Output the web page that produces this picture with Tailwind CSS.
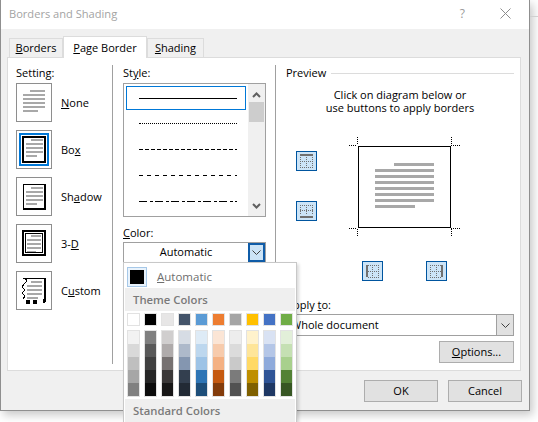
<!DOCTYPE html>
<html lang="en">
<head>
<meta charset="UTF-8">
<title>Borders and Shading</title>
<script src="https://cdn.jsdelivr.net/npm/@tailwindcss/browser@4"></script>
</head>
<body class="bg-white">
<div class="relative w-[538px] h-[422px] overflow-hidden bg-white font-['Open_Sans',sans-serif] text-[11px] leading-[16px] text-black">
  <div class="absolute right-0 top-[16px] w-[8px] h-px bg-[#d0d0d0]"></div>

  <!-- Dialog -->
  <div class="w-[530px] h-[411px] border-x border-b border-[#8f8f8f] bg-[#f0f0f0] shadow-[3px_4px_9px_rgba(0,0,0,0.22)]">
    <!-- Title bar -->
    <div class="h-[29px] bg-white flex items-center pl-[8px] pr-[12px] pb-[2px]">
      <span class="text-[11.1px] text-[#a3a3a3]">Borders and Shading</span>
      <span class="ml-auto text-[12px] text-[#9a9a9a] mr-[35px]">?</span>
      <svg class="w-[11px] h-[11px] mr-[6px]" viewBox="0 0 11 11" fill="none" stroke="#8c8c8c"><path d="M0.5 0.5l10 10M10.5 0.5l-10 10"/></svg>
    </div>

    <!-- Tabs -->
    <div class="flex items-end h-[28px] pl-[8px] relative z-10">
      <div class="w-[54px] h-[19px] border border-b-0 border-[#dcdcdc] bg-[#f0f0f0] flex items-center justify-center"><span><u>B</u>orders</span></div>
      <div class="w-[84px] h-[22px] mb-[-1px] border border-b-0 border-[#dcdcdc] bg-white flex items-center justify-center"><span><u>P</u>age Border</span></div>
      <div class="w-[57px] h-[19px] border border-b-0 border-[#dcdcdc] bg-[#f0f0f0] flex items-center justify-center"><span><u>S</u>hading</span></div>
    </div>

    <!-- Panel -->
    <div class="ml-[6px] w-[514px] h-[314px] border border-[#dcdcdc] bg-white flex pt-[7px]">
      <!-- Setting -->
      <div class="w-[105px] h-[299px] border-r border-[#a0a0a0] pl-[8px]">
        <div class="h-[16px] mb-[2px]">Setting:</div>
        <div class="flex flex-col gap-[8px]">
          <div class="flex items-center gap-[9px] h-[39px]">
            <div class="w-[36px] h-[39px] border border-[#8e8e8e]">
              <svg width="34" height="37" shape-rendering="crispEdges"><path fill="#a8a8a8" d="M13 6h15v2H13zM6 10h22v2H6zM6 14h22v2H6zM6 18h22v2H6zM6 22h22v2H6zM6 26h15v2H6z"/></svg>
            </div>
            <span><u>N</u>one</span>
          </div>
          <div class="flex items-center gap-[9px] h-[39px]">
            <div class="w-[36px] h-[39px] border border-[#8e8e8e]">
              <svg width="34" height="37" shape-rendering="crispEdges"><path fill="none" stroke="#0078d7" stroke-width="2" d="M3 3h28v31H3z"/><path fill="none" stroke="#000" stroke-width="2" d="M6 6h22v25H6z"/><path fill="#a8a8a8" d="M14 8h12v2H14zM9 12h17v2H9zM9 16h17v2H9zM9 20h17v2H9zM9 24h11v2H9z"/></svg>
            </div>
            <span>Bo<u>x</u></span>
          </div>
          <div class="flex items-center gap-[9px] h-[39px]">
            <div class="w-[36px] h-[39px] border border-[#8e8e8e]">
              <svg width="34" height="37" shape-rendering="crispEdges"><path fill="#000" d="M6 6h21v1H7v23h20v2H6zM27 6h2v26h-2z"/><path fill="#a8a8a8" d="M14 9h12v2H14zM9 13h17v2H9zM9 17h17v2H9zM9 21h17v2H9zM9 25h11v2H9z"/></svg>
            </div>
            <span>Sh<u>a</u>dow</span>
          </div>
          <div class="flex items-center gap-[9px] h-[39px]">
            <div class="w-[36px] h-[39px] border border-[#8e8e8e]">
              <svg width="34" height="37" shape-rendering="crispEdges"><path fill="none" stroke="#000" stroke-width="2" d="M6 6h22v24H6z"/><path fill="none" stroke="#000" d="M8.500 8.500h17v19h-17z"/><path fill="#a8a8a8" d="M14 10h10v2H14zM10 14h14v2H10zM10 18h14v2H10zM10 22h14v2H10zM10 26h9v1H10z"/></svg>
            </div>
            <span>3-<u>D</u></span>
          </div>
          <div class="flex items-center gap-[9px] h-[39px]">
            <div class="w-[36px] h-[39px] border border-[#8e8e8e]">
              <svg width="34" height="37" shape-rendering="crispEdges"><path fill="none" stroke="#000" d="M6 6.500h21M8 6l2 3-3 3-2 3 3 3-3 3 3 3-2 3"/><path fill="#000" d="M27 6h2v24h-1v1h-2v-4h1zM9 28h4v4H9zM16 28h4v4h-4z"/><path fill="#a8a8a8" d="M14 9h11v2H14zM10 13h15v2H10zM10 17h15v2H10zM10 21h15v2H10zM10 25h11v2H10z"/></svg>
            </div>
            <span>C<u>u</u>stom</span>
          </div>
        </div>
      </div>

      <!-- Style -->
      <div class="w-[163px] h-[299px] border-r border-[#a0a0a0] pl-[10px]">
        <div class="h-[16px] mb-[2px]">St<u>y</u>le:</div>
        <div class="w-[143px] h-[134px] border border-[#a0a0a0] flex">
          <div class="w-[124px] pl-[2px] pt-[2px]">
            <div class="w-[120px] h-[24px] border border-[#0078d7] flex items-center pl-[12px]"><div class="w-[98px] border-t border-black"></div></div>
            <div class="h-[26px] flex items-center pl-[13px]"><div class="w-[98px] border-t border-dotted border-black"></div></div>
            <svg width="122" height="78" class="block" fill="none" stroke="#000" shape-rendering="crispEdges"><path stroke-dasharray="4 2" d="M13 13.500h98"/><path stroke-dasharray="4 4" d="M13 39.500h98"/><path stroke-dasharray="8 3 3 2" d="M13 65.500h98"/></svg>
          </div>
          <div class="w-[17px] h-[132px] bg-[#f0f0f0] flex flex-col items-center">
            <svg class="mt-[8px]" width="9" height="6" fill="none" stroke="#606060" stroke-width="2"><path d="M1 5l3.500-3.500L8 5"/></svg>
            <div class="w-[15px] h-[20px] mt-[4px] bg-[#cdcdcd]"></div>
            <svg class="mt-auto mb-[7px]" width="9" height="6" fill="none" stroke="#606060" stroke-width="2"><path d="M1 1l3.500 3.500L8 1"/></svg>
          </div>
        </div>
        <div class="h-[16px] mt-[8px] mb-[1px]"><u>C</u>olor:</div>
        <div class="w-[143px] h-[21px] border border-[#a0a0a0] flex">
          <div class="w-[124px] flex items-center justify-center pb-px">Automatic</div>
          <div class="w-[17px] h-[19px] border-2 border-[#0f5ca8] bg-[#cce4f7] flex items-center justify-center">
            <svg width="9" height="5" fill="none" stroke="#404040"><path d="M0.500 0.500l4 4 4-4"/></svg>
          </div>
        </div>
      </div>

      <!-- Preview -->
      <div class="w-[238px] pl-[10px]">
        <div class="flex items-center w-[228px] h-[16px]">
          <span>Preview</span>
          <div class="ml-[5px] flex-1 border-t border-[#dcdcdc]"></div>
        </div>
        <div class="w-[228px] mt-[7px] text-center leading-[13px]">Click on diagram below or<br>use buttons to apply borders</div>
        <div class="relative h-[183px] w-[228px]">
          <div class="absolute left-[10px] top-[37px] w-[21px] h-[20px] border border-[#00559f] bg-[#cce4f7]">
            <svg width="19" height="18" fill="none" stroke="#707070" shape-rendering="crispEdges"><path stroke-width="2" d="M3 3h13"/><path stroke-dasharray="1 1" d="M3.500 5v10M15.500 5v10M9.500 5v10M3 9.500h13M3 15.500h13"/></svg>
          </div>
          <div class="absolute left-[10px] top-[87px] w-[21px] h-[20px] border border-[#00559f] bg-[#cce4f7]">
            <svg width="19" height="18" fill="none" stroke="#707070" shape-rendering="crispEdges"><path stroke-width="2" d="M3 15h13"/><path stroke-dasharray="1 1" d="M3.500 3v10M15.500 3v10M9.500 3v10M3 8.500h13M3 3.500h13"/></svg>
          </div>
          <div class="absolute left-[76px] top-[147px] w-[21px] h-[20px] border border-[#00559f] bg-[#cce4f7]">
            <svg width="19" height="18" fill="none" stroke="#707070" shape-rendering="crispEdges"><path stroke-width="2" d="M4 3v12"/><path stroke-dasharray="1 1" d="M5 3.500h11M5 9.500h11M5 15.500h11M15.500 3v12M9.500 3v12"/></svg>
          </div>
          <div class="absolute left-[140px] top-[147px] w-[21px] h-[20px] border border-[#00559f] bg-[#cce4f7]">
            <svg width="19" height="18" fill="none" stroke="#707070" shape-rendering="crispEdges"><path stroke-width="2" d="M15 3v12"/><path stroke-dasharray="1 1" d="M3 3.500h11M3 9.500h11M3 15.500h11M3.500 3v12M9.500 3v12"/></svg>
          </div>
          <svg class="absolute left-[63px] top-[23px]" width="112" height="100" fill="none" shape-rendering="crispEdges">
            <path stroke="#000" stroke-dasharray="1 1" d="M0 8.500h8M8.500 0v8M102 8.500h9M102.500 0v8M0 91.500h8M8.500 92v8M102 91.500h9M102.500 92v8"/>
            <rect x="9.500" y="9.500" width="92" height="81" stroke="#000"/>
            <path fill="#a8a8a8" d="M45 26h40v3H45zM26 32h59v3H26zM26 38h59v3H26zM26 44h59v3H26zM26 50h59v3H26zM26 56h59v3H26zM26 62h59v3H26zM26 68h40v3H26z"/>
          </svg>
        </div>
        <div class="h-[16px]">Apply <u>t</u>o:</div>
        <div class="w-[228px] h-[22px] border border-[#a0a0a0] flex items-center justify-between mt-[1px]">
          <span class="pl-[4px]">Whole document</span>
          <div class="w-[17px] h-[20px] bg-[#e1e1e1] border-l border-[#a0a0a0] flex items-center justify-center">
            <svg width="9" height="5" fill="none" stroke="#404040"><path d="M0.500 0.500l4 4 4-4"/></svg>
          </div>
        </div>
        <div class="w-[228px] flex justify-end mt-[5px]">
          <div class="w-[75px] h-[22px] border border-[#adadad] bg-[#e1e1e1] flex items-center justify-center"><span><u>O</u>ptions...</span></div>
        </div>
      </div>
    </div>

    <!-- Buttons -->
    <div class="flex gap-[10px] pl-[363px] pt-[9px]">
      <div class="w-[74px] h-[22px] border border-[#adadad] bg-[#e1e1e1] flex items-center justify-center">OK</div>
      <div class="w-[74px] h-[22px] border border-[#adadad] bg-[#e1e1e1] flex items-center justify-center">Cancel</div>
    </div>
  </div>

  <!-- Color dropdown -->
  <div class="absolute left-[123px] top-[262px] w-[174px] h-[170px] border border-[#c8c8c8] bg-white shadow-[2px_2px_3px_rgba(0,0,0,0.15)]">
    <div class="flex items-center h-[25px] pl-[3px] pt-[3px]">
      <div class="w-[20px] h-[20px] border border-[#a6c8e8] bg-[#e8f2fb] flex items-center justify-center"><div class="w-[14px] h-[14px] bg-black"></div></div>
      <span class="ml-[10px] text-[11.5px] text-[#6e6e6e]"><u>A</u>utomatic</span>
    </div>
    <div class="h-[23px] mx-px bg-[#efefef] pl-[8px] flex items-center font-semibold text-[11.3px] text-[#7a7a7a]">Theme Colors</div>
    <div class="flex gap-[4px] pl-[3px] mt-[2px]">
      <div class="w-[13px] h-[13px] border border-[#e2e2e2] bg-[#ffffff]"></div>
      <div class="w-[13px] h-[13px] border border-[#e2e2e2] bg-[#000000]"></div>
      <div class="w-[13px] h-[13px] border border-[#e2e2e2] bg-[#e7e6e6]"></div>
      <div class="w-[13px] h-[13px] border border-[#e2e2e2] bg-[#44546a]"></div>
      <div class="w-[13px] h-[13px] border border-[#e2e2e2] bg-[#5b9bd5]"></div>
      <div class="w-[13px] h-[13px] border border-[#e2e2e2] bg-[#ed7d31]"></div>
      <div class="w-[13px] h-[13px] border border-[#e2e2e2] bg-[#a5a5a5]"></div>
      <div class="w-[13px] h-[13px] border border-[#e2e2e2] bg-[#ffc000]"></div>
      <div class="w-[13px] h-[13px] border border-[#e2e2e2] bg-[#4472c4]"></div>
      <div class="w-[13px] h-[13px] border border-[#e2e2e2] bg-[#70ad47]"></div>
    </div>
    <div class="flex gap-[4px] pl-[3px] mt-[4px]">
      <div class="w-[13px] h-[67px] border border-[#e2e2e2] flex flex-col"><div class="flex-1 bg-[#f2f2f2]"></div><div class="flex-1 bg-[#d9d9d9]"></div><div class="flex-1 bg-[#bfbfbf]"></div><div class="flex-1 bg-[#a6a6a6]"></div><div class="flex-1 bg-[#808080]"></div></div>
      <div class="w-[13px] h-[67px] border border-[#e2e2e2] flex flex-col"><div class="flex-1 bg-[#7f7f7f]"></div><div class="flex-1 bg-[#595959]"></div><div class="flex-1 bg-[#404040]"></div><div class="flex-1 bg-[#262626]"></div><div class="flex-1 bg-[#0d0d0d]"></div></div>
      <div class="w-[13px] h-[67px] border border-[#e2e2e2] flex flex-col"><div class="flex-1 bg-[#d0cece]"></div><div class="flex-1 bg-[#afabab]"></div><div class="flex-1 bg-[#767171]"></div><div class="flex-1 bg-[#3b3838]"></div><div class="flex-1 bg-[#181717]"></div></div>
      <div class="w-[13px] h-[67px] border border-[#e2e2e2] flex flex-col"><div class="flex-1 bg-[#d6dce4]"></div><div class="flex-1 bg-[#adb9ca]"></div><div class="flex-1 bg-[#8496b0]"></div><div class="flex-1 bg-[#333f4f]"></div><div class="flex-1 bg-[#222a35]"></div></div>
      <div class="w-[13px] h-[67px] border border-[#e2e2e2] flex flex-col"><div class="flex-1 bg-[#deebf6]"></div><div class="flex-1 bg-[#bdd7ee]"></div><div class="flex-1 bg-[#9dc3e6]"></div><div class="flex-1 bg-[#2e75b5]"></div><div class="flex-1 bg-[#1e4e79]"></div></div>
      <div class="w-[13px] h-[67px] border border-[#e2e2e2] flex flex-col"><div class="flex-1 bg-[#fbe5d5]"></div><div class="flex-1 bg-[#f7cbac]"></div><div class="flex-1 bg-[#f4b183]"></div><div class="flex-1 bg-[#c55a11]"></div><div class="flex-1 bg-[#833c0b]"></div></div>
      <div class="w-[13px] h-[67px] border border-[#e2e2e2] flex flex-col"><div class="flex-1 bg-[#ededed]"></div><div class="flex-1 bg-[#dbdbdb]"></div><div class="flex-1 bg-[#c9c9c9]"></div><div class="flex-1 bg-[#7b7b7b]"></div><div class="flex-1 bg-[#525252]"></div></div>
      <div class="w-[13px] h-[67px] border border-[#e2e2e2] flex flex-col"><div class="flex-1 bg-[#fff2cc]"></div><div class="flex-1 bg-[#fee599]"></div><div class="flex-1 bg-[#ffd965]"></div><div class="flex-1 bg-[#bf8f00]"></div><div class="flex-1 bg-[#7f6000]"></div></div>
      <div class="w-[13px] h-[67px] border border-[#e2e2e2] flex flex-col"><div class="flex-1 bg-[#d9e2f3]"></div><div class="flex-1 bg-[#b4c6e7]"></div><div class="flex-1 bg-[#8eaadb]"></div><div class="flex-1 bg-[#2f5496]"></div><div class="flex-1 bg-[#1f3864]"></div></div>
      <div class="w-[13px] h-[67px] border border-[#e2e2e2] flex flex-col"><div class="flex-1 bg-[#e2efd9]"></div><div class="flex-1 bg-[#c5e0b3]"></div><div class="flex-1 bg-[#a8d08d]"></div><div class="flex-1 bg-[#538135]"></div><div class="flex-1 bg-[#375623]"></div></div>
    </div>
    <div class="h-[23px] mx-px mt-[2px] bg-[#efefef] pl-[8px] flex items-center font-semibold text-[11.3px] text-[#7a7a7a]">Standard Colors</div>
  </div>
</div>
</body>
</html>
